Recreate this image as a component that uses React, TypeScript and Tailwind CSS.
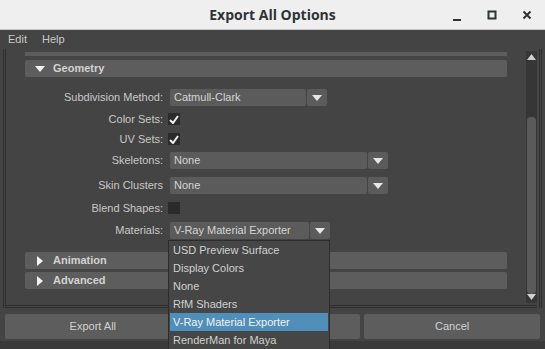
import { ReactNode } from 'react'

const font = { fontFamily: '"Liberation Sans", Arial, sans-serif' }

function DownArrow() {
  return (
    <svg width="10" height="6" viewBox="0 0 10 6">
      <path d="M0 0 H10 L5 6 Z" fill="#e6e6e6" />
    </svg>
  )
}

function Dropdown({ value, width }: { value: string; width: number }) {
  return (
    <div className="flex h-[17px] gap-[1px]" style={{ width }}>
      <div className="flex-1 bg-[#5b5b5b] rounded-[2px] pl-[4px] flex items-center text-[#d4d4d4] text-[11px] leading-none">
        {value}
      </div>
      <div className="w-[20px] bg-[#5b5b5b] rounded-[2px] flex items-center justify-center">
        <DownArrow />
      </div>
    </div>
  )
}

function Checkbox({ checked }: { checked: boolean }) {
  return (
    <div className="w-[12px] h-[12px] bg-[#2b2b2b] flex items-center justify-center ml-[-2px]">
      {checked && (
        <svg width="10" height="9" viewBox="0 0 10 9">
          <path d="M1 5 L4 8 L9 1" stroke="#f0f0f0" strokeWidth="2" fill="none" />
        </svg>
      )}
    </div>
  )
}

function Row({ label, h, children }: { label: string; h: number; children?: ReactNode }) {
  return (
    <div className="flex items-center relative" style={{ height: h }}>
      <div className="w-[140px] text-right pr-[2px] text-[#c8c8c8] text-[11px] leading-none whitespace-nowrap">{label}</div>
      <div className="ml-[5px]">{children}</div>
    </div>
  )
}

function Section({ title, open }: { title: string; open?: boolean }) {
  return (
    <div className="h-[17px] bg-[#5d5d5d] rounded-[2px] flex items-center">
      <div className="w-[28px] flex justify-center pl-[2px]">
        {open ? (
          <svg width="10" height="6" viewBox="0 0 10 6">
            <path d="M0 0 H10 L5 6 Z" fill="#f2f2f2" />
          </svg>
        ) : (
          <svg width="6" height="10" viewBox="0 0 6 10">
            <path d="M0 0 V10 L6 5 Z" fill="#f2f2f2" />
          </svg>
        )}
      </div>
      <span className="text-[11px] font-bold text-[#d2d2d2] leading-none">{title}</span>
    </div>
  )
}

const materials = [
  'USD Preview Surface',
  'Display Colors',
  'None',
  'RfM Shaders',
  'V-Ray Material Exporter',
  'RenderMan for Maya',
]

export default function App() {
  return (
    <div className="w-[545px] h-[349px] overflow-hidden bg-[#444444] flex flex-col relative" style={font}>
      {/* title bar */}
      <div className="h-[30px] shrink-0 bg-[#efefef] border-b border-[#c4c4c0] grid grid-cols-[1fr_auto_1fr] items-center">
        <div />
        <div className="text-[14px] font-bold text-[#2e3436]" style={{ fontFamily: '"Open Sans", "Noto Sans", sans-serif' }}>
          Export All Options
        </div>
        <div className="flex justify-end items-center pr-[13px]">
          <svg width="10" height="10" viewBox="0 0 10 10" className="mr-[25px] mt-[4px]">
            <rect x="1" y="7" width="8" height="2" fill="#2e3436" />
          </svg>
          <svg width="10" height="10" viewBox="0 0 10 10" className="mr-[25px]">
            <rect x="1.5" y="1.5" width="7" height="7" fill="none" stroke="#2e3436" strokeWidth="2" />
          </svg>
          <svg width="10" height="10" viewBox="0 0 10 10">
            <path d="M1.5 1.5 L8.5 8.5 M8.5 1.5 L1.5 8.5" stroke="#2e3436" strokeWidth="2" />
          </svg>
        </div>
      </div>

      {/* menu bar */}
      <div className="h-[19px] shrink-0 flex items-center gap-[15px] pl-[8px] text-[11px] text-[#c8c8c8]">
        <span>Edit</span>
        <span>Help</span>
      </div>

      {/* scroll frame */}
      <div className="h-[259px] shrink-0 mx-[3px] border-l-[3px] border-double border-[#2f2f2f] flex">
        <div className="flex-1 border-b-[3px] border-double border-[#2f2f2f] flex">
          <div className="flex-1 pl-[19px] pr-[19px] pt-[3px]">
            <div className="h-[4px] bg-[#5d5d5d] mb-[4px]" />
            <Section title="Geometry" open />
            <div className="mt-[10px]">
              <Row label="Subdivision Method:" h={21}>
                <Dropdown value="Catmull-Clark" width={157} />
              </Row>
              <Row label="Color Sets:" h={22}>
                <Checkbox checked />
              </Row>
              <Row label="UV Sets:" h={18}>
                <Checkbox checked />
              </Row>
              <Row label="Skeletons:" h={25}>
                <Dropdown value="None" width={218} />
              </Row>
              <Row label="Skin Clusters" h={25}>
                <Dropdown value="None" width={218} />
              </Row>
              <Row label="Blend Shapes:" h={20}>
                <Checkbox checked={false} />
              </Row>
              <Row label="Materials:" h={25}>
                <Dropdown value="V-Ray Material Exporter" width={160} />
                <div className="absolute left-[143px] top-[22px] w-[162px] bg-[#464646] border border-[#2c2c2c] z-10">
                  {materials.map((m) => (
                    <div
                      key={m}
                      className={
                        'h-[18px] flex items-center px-[3px] text-[11px] leading-none mx-[1px] ' +
                        (m === 'V-Ray Material Exporter' ? 'bg-[#4f8fba] text-[#f2f2f2]' : 'text-[#d0d0d0]')
                      }
                    >
                      {m}
                    </div>
                  ))}
                </div>
              </Row>
            </div>
            <div className="mt-[9px] flex flex-col gap-[3px]">
              <Section title="Animation" />
              <Section title="Advanced" />
            </div>
          </div>
          {/* scrollbar */}
          <div className="w-[11px] mt-[2px] mb-[2px] bg-[#363636] flex flex-col items-center">
            <svg width="9" height="6" viewBox="0 0 9 6" className="mt-[3px]">
              <path d="M0 6 H9 L4.5 0 Z" fill="#cfcfcf" />
            </svg>
            <div className="w-[9px] mt-[57px] h-[178px] bg-[#5a5a5a] rounded-[4px]" />
            <div className="flex-1" />
            <svg width="9" height="6" viewBox="0 0 9 6" className="mb-[3px]">
              <path d="M0 0 H9 L4.5 6 Z" fill="#cfcfcf" />
            </svg>
          </div>
        </div>
        <div className="w-[3px] ml-[2px] border-x border-[#2f2f2f]" />
      </div>

      {/* buttons */}
      <div className="flex gap-[4px] px-[5px] mt-[6px] h-[25px] shrink-0">
        <div className="flex-1 bg-[#5d5d5d] rounded-[2px] flex items-center justify-center text-[11px] text-[#d0d0d0]">Export All</div>
        <div className="flex-1 bg-[#5d5d5d] rounded-[2px]" />
        <div className="flex-1 bg-[#5d5d5d] rounded-[2px] flex items-center justify-center text-[11px] text-[#d0d0d0]">Cancel</div>
      </div>
      <div className="flex-1 mt-[2px] bg-[#3a3a3a]" />
    </div>
  )
}
